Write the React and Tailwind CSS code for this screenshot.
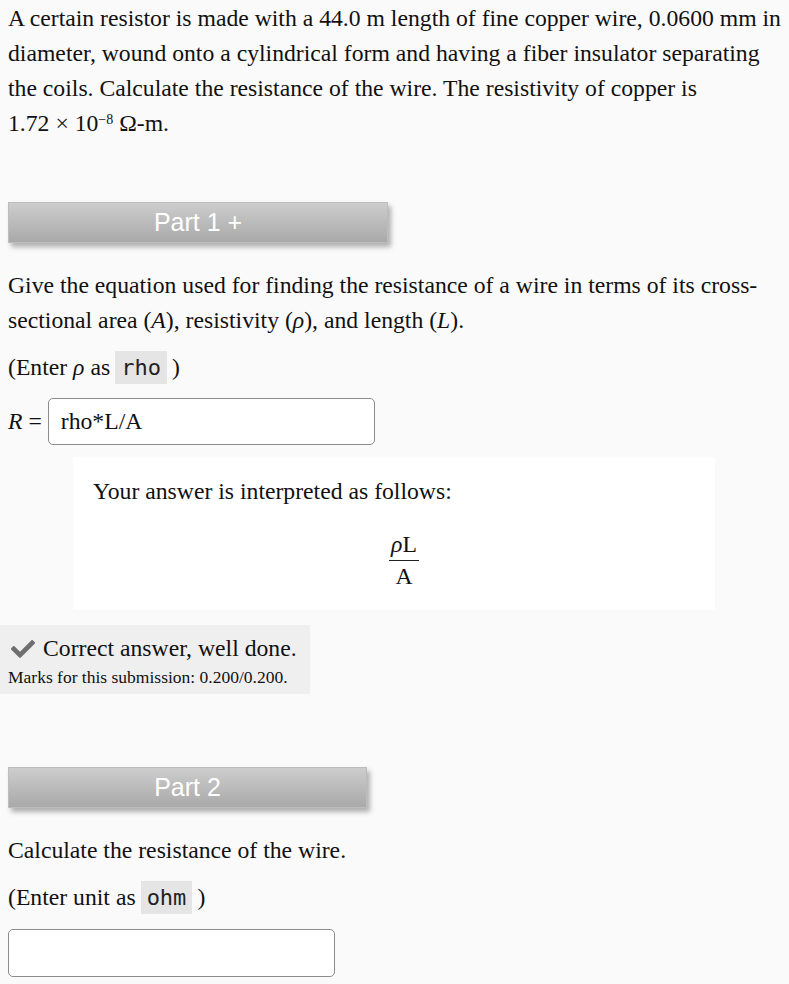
import { FaCheck } from "react-icons/fa";

const serif = "font-['Liberation_Serif','Times_New_Roman',serif]";

const Code = ({ children }) => (
  <code className="mx-[5px] inline-block bg-[#e5e5e5] px-[6px] font-['DejaVu_Sans_Mono',monospace] text-[22px] leading-[33px] text-[#222]">
    {children}
  </code>
);

const PartBar = ({ label, width }) => (
  <div
    className={`${width} flex h-[41px] items-center justify-center border border-[#bdbdbd] bg-gradient-to-b from-[#cdcdcd] to-[#a9a9a9] font-['Liberation_Sans',Arial,sans-serif] text-[25px] text-white shadow-[3px_4px_5px_rgba(0,0,0,0.3)]`}
  >
    {label}
  </div>
);

export default function App() {
  return (
    <div className={`${serif} min-h-[984px] w-[789px] bg-[#fafafa] px-2 text-[23.7px] leading-[35px] text-[#111]`}>
      <p className="pt-[1px]">
        A certain resistor is made with a 44.0 m length of fine copper wire, 0.0600 mm in
        <br />
        diameter, wound onto a cylindrical form and having a fiber insulator separating
        <br />
        the coils. Calculate the resistance of the wire. The resistivity of copper is
        <br />
        1.72 × 10<sup className="text-[14px]">−8</sup> Ω-m.
      </p>

      <div className="mt-[61px]">
        <PartBar label="Part 1 +" width="w-[380px]" />
      </div>

      <p className="mt-[25px]">
        Give the equation used for finding the resistance of a wire in terms of its cross-
        <br />
        sectional area (<i>A</i>), resistivity (<i>ρ</i>), and length (<i>L</i>).
      </p>
      <p className="mt-[12px]">
        (Enter <i>ρ</i> as<Code>rho</Code>)
      </p>

      <div className="mt-[13px] flex items-center gap-[6px]">
        <span>
          <i>R</i> =
        </span>
        <div className="flex h-[47px] w-[327px] items-center rounded-[5px] border border-[#8c8c8c] bg-white px-[12px]">
          rho*L/A
        </div>
      </div>

      <div className="ml-[65px] mt-[12px] h-[153px] w-[642px] bg-white px-[20px] pt-[17px]">
        <p>Your answer is interpreted as follows:</p>
        <div className="mt-[20px] flex justify-center">
          <div className="ml-[20px] flex flex-col items-center leading-[31px]">
            <span className="border-b border-[#222] px-[2px]">
              <i>ρ</i>L
            </span>
            <span>A</span>
          </div>
        </div>
      </div>

      <div className="-ml-2 mt-[15px] w-[310px] bg-[#efefef] px-2 pb-[6px] pt-[6px]">
        <div className="flex items-center gap-[8px] whitespace-nowrap">
          <FaCheck className="ml-[3px] shrink-0 text-[24px] text-[#6f6f6f]" />
          <span className="text-[23.7px]">Correct answer, well done.</span>
        </div>
        <p className="whitespace-nowrap text-[17.5px] leading-[22px]">Marks for this submission: 0.200/0.200.</p>
      </div>

      <div className="mt-[73px]">
        <PartBar label="Part 2" width="w-[359px]" />
      </div>

      <p className="mt-[25px]">Calculate the resistance of the wire.</p>
      <p className="mt-[12px]">
        (Enter unit as<Code>ohm</Code>)
      </p>
      <div className="mt-[14px] h-[48px] w-[327px] rounded-[5px] border border-[#8c8c8c] bg-white" />
    </div>
  );
}
